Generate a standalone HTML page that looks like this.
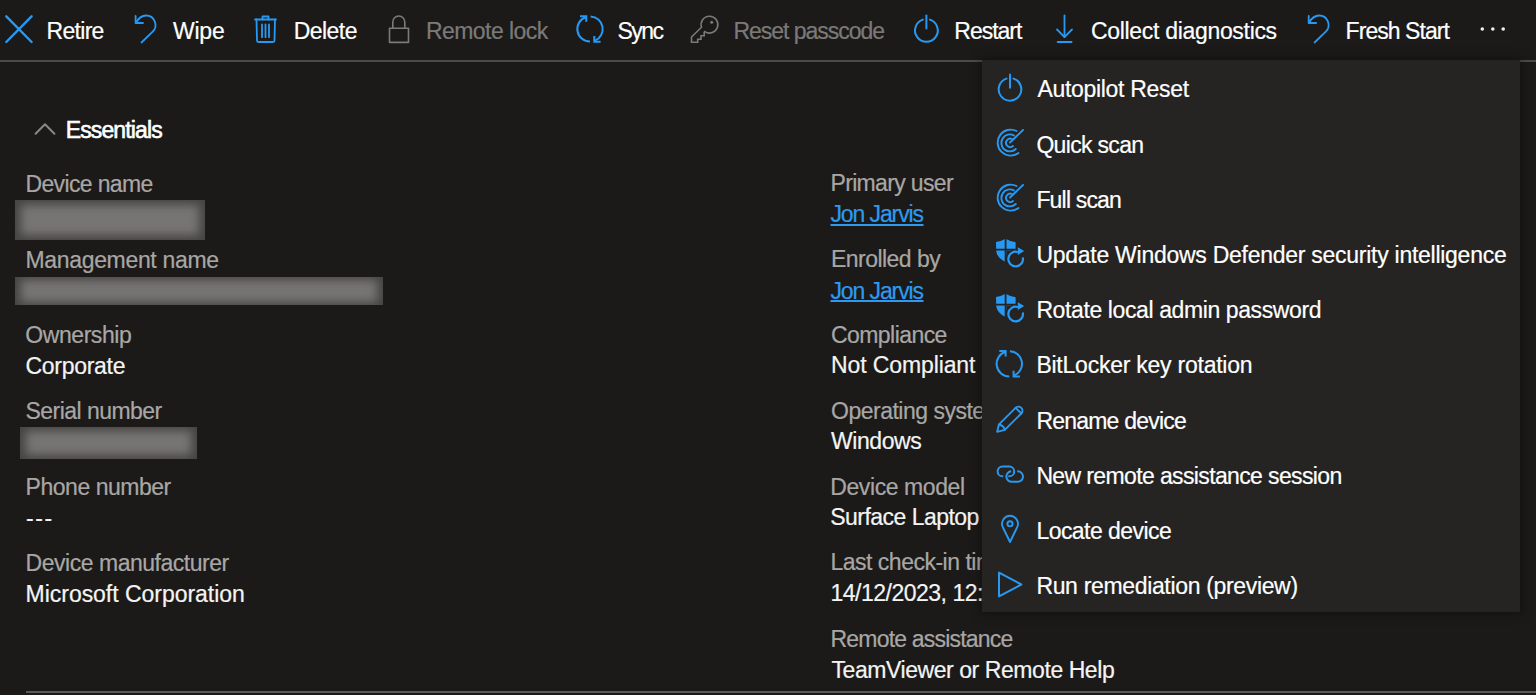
<!DOCTYPE html>
<html><head><meta charset="utf-8"><style>
html,body{margin:0;padding:0;}
body{width:1536px;height:695px;overflow:hidden;background:#1b1a19;position:relative;font-family:"Liberation Sans",sans-serif;}
.t{position:absolute;white-space:nowrap;font-size:23px;line-height:23px;-webkit-text-stroke:0.2px currentColor;}
.ov{position:absolute;left:0;top:0;z-index:2;}
.blur{position:absolute;z-index:2;background:#464544;overflow:hidden;} .blur i{position:absolute;background:#777573;filter:blur(5px);}
.menu{position:absolute;left:982px;top:60px;width:538px;height:552px;background:#252423;z-index:4;box-shadow:0 0 10px 2px rgba(0,0,0,0.35);}
.mt{z-index:5;}
</style></head><body>
<span class="t" style="left:46.50px;top:19.90px;color:#ffffff;letter-spacing:-0.692px;">Retire</span><span class="t" style="left:172.90px;top:19.90px;color:#ffffff;letter-spacing:-0.170px;">Wipe</span><span class="t" style="left:293.70px;top:19.90px;color:#ffffff;letter-spacing:-0.539px;">Delete</span><span class="t" style="left:425.90px;top:19.90px;color:#7b7a79;letter-spacing:-0.548px;">Remote lock</span><span class="t" style="left:617.50px;top:19.90px;color:#ffffff;letter-spacing:-1.544px;">Sync</span><span class="t" style="left:733.40px;top:19.90px;color:#7b7a79;letter-spacing:-1.026px;">Reset passcode</span><span class="t" style="left:954.30px;top:19.90px;color:#ffffff;letter-spacing:-1.007px;">Restart</span><span class="t" style="left:1091.00px;top:19.90px;color:#ffffff;letter-spacing:-0.314px;">Collect diagnostics</span><span class="t" style="left:1345.60px;top:19.90px;color:#ffffff;letter-spacing:-0.946px;">Fresh Start</span><span class="t" style="left:65.70px;top:119.10px;color:#ffffff;letter-spacing:-0.869px;-webkit-text-stroke:0.6px #fff;">Essentials</span><span class="t" style="left:25.50px;top:172.50px;color:#a9a7a5;letter-spacing:-0.644px;">Device name</span><span class="t" style="left:25.50px;top:248.50px;color:#a9a7a5;letter-spacing:-0.334px;">Management name</span><span class="t" style="left:25.25px;top:324.10px;color:#a9a7a5;letter-spacing:-0.424px;">Ownership</span><span class="t" style="left:25.50px;top:355.20px;color:#f4f4f4;letter-spacing:-0.286px;">Corporate</span><span class="t" style="left:25.50px;top:400.40px;color:#a9a7a5;letter-spacing:-0.535px;">Serial number</span><span class="t" style="left:25.60px;top:476.20px;color:#a9a7a5;letter-spacing:-0.475px;">Phone number</span><span class="t" style="left:26.00px;top:507.00px;color:#f4f4f4;letter-spacing:1.641px;">---</span><span class="t" style="left:25.60px;top:551.80px;color:#a9a7a5;letter-spacing:-0.474px;">Device manufacturer</span><span class="t" style="left:25.60px;top:583.20px;color:#f4f4f4;letter-spacing:-0.033px;">Microsoft Corporation</span><span class="t" style="left:830.50px;top:172.00px;color:#a9a7a5;letter-spacing:-0.663px;">Primary user</span><span class="t" style="left:830.40px;top:203.30px;color:#2d9af0;letter-spacing:-1.093px;">Jon Jarvis</span><span class="t" style="left:831.00px;top:247.90px;color:#a9a7a5;letter-spacing:-0.537px;">Enrolled by</span><span class="t" style="left:830.40px;top:279.60px;color:#2d9af0;letter-spacing:-1.093px;">Jon Jarvis</span><span class="t" style="left:831.00px;top:324.30px;color:#a9a7a5;letter-spacing:-0.562px;">Compliance</span><span class="t" style="left:831.00px;top:354.20px;color:#f4f4f4;letter-spacing:-0.111px;">Not Compliant</span><span class="t" style="left:831.00px;top:400.00px;color:#a9a7a5;letter-spacing:-0.500px;">Operating system</span><span class="t" style="left:831.00px;top:430.20px;color:#f4f4f4;letter-spacing:-0.417px;">Windows</span><span class="t" style="left:830.30px;top:475.60px;color:#a9a7a5;letter-spacing:-0.412px;">Device model</span><span class="t" style="left:830.30px;top:506.20px;color:#f4f4f4;letter-spacing:-0.532px;">Surface Laptop</span><span class="t" style="left:830.50px;top:551.00px;color:#a9a7a5;letter-spacing:-0.500px;">Last check-in time</span><span class="t" style="left:830.50px;top:582.20px;color:#f4f4f4;letter-spacing:-0.500px;">14/12/2023, 12:34:56</span><span class="t" style="left:830.50px;top:627.50px;color:#a9a7a5;letter-spacing:-0.800px;">Remote assistance</span><span class="t" style="left:831.50px;top:658.90px;color:#f4f4f4;letter-spacing:-0.433px;">TeamViewer or Remote Help</span>

<svg class="ov" width="1536" height="695" viewBox="0 0 1536 695" fill="none" stroke-linecap="round" stroke-linejoin="round">
 <!-- lines -->
 <rect x="0" y="60" width="1536" height="2" fill="#4c4b4a" stroke="none"/>
 <rect x="26" y="691" width="1510" height="2" fill="#5a5a5a" stroke="none"/>
 <!-- X -->
 <path d="M6.3 16.3 L31.6 42 M31.6 16.3 L6.3 42" stroke="#2899f2" stroke-width="2.4"/>
 <!-- wipe -->
 <g stroke="#2899f2" stroke-width="1.8">
  <path d="M135.6 16 V23 H143"/>
  <path d="M136 22.5 C139 17.5 142.5 15.5 146 15.5 A9.5 9.5 0 0 1 152.7 31.7 L141.5 42.5"/>
 </g>
 <!-- trash -->
 <g stroke="#2899f2" stroke-width="1.8">
  <path d="M255 19.5 H276"/>
  <path d="M262.5 19.5 V16.5 H268.5 V19.5"/>
  <path d="M256.5 19.5 L257 40.5 Q257 42 258.5 42 H273 Q274.5 42 274.5 40.5 L275 19.5"/>
  <path d="M262 24.5 V37.2 M265.5 24.5 V37.2 M269 24.5 V37.2"/>
 </g>
 <!-- lock -->
 <g stroke="#7b7a79" stroke-width="1.6">
  <path d="M392.8 28 V22 A6 6 0 0 1 404.8 22 V28"/>
  <rect x="389.5" y="28.2" width="19" height="14.2"/>
 </g>
 <!-- sync -->
 <g id="sync" stroke="#2899f2" stroke-width="2" stroke-linecap="butt" stroke-linejoin="miter">
  <path d="M586.1 17 A12.6 12.6 0 0 0 590 41.6"/>
  <path d="M590.6 16.4 A12.6 12.6 0 0 1 595 40.6"/>
  <path d="M580 16.3 H586.3 V21.8"/>
  <path d="M594.3 36 V41.8 H600.6"/>
 </g>
 <!-- key -->
 <g stroke="#7b7a79" stroke-width="1.6">
  <path d="M701.5 27.3 L691.5 37 V42.3 H697.7 V39.2 H701 V35.8 H704.2 V32.3 L704.8 31.65 A8.4 8.4 0 1 0 701.5 27.3 Z" stroke-linejoin="miter"/>
  <circle cx="711.7" cy="22.3" r="1.5" fill="#7b7a79" stroke="none"/>
 </g>
 <!-- power -->
 <g stroke="#2899f2" stroke-width="2">
  <path d="M926.4 15.5 V28.5"/>
  <path d="M922.9 19.65 A11.35 11.35 0 1 0 929.9 19.65"/>
 </g>
 <!-- download -->
 <g stroke="#2899f2" stroke-width="1.8">
  <path d="M1064.5 15.5 V37"/>
  <path d="M1057 29.5 L1064.5 37 L1072 29.5"/>
  <path d="M1057.6 42 H1071.6"/>
 </g>
 <!-- fresh -->
 <g stroke="#2899f2" stroke-width="1.8" transform="translate(1173.1 0)">
  <path d="M135.6 16 V23 H143"/>
  <path d="M136 22.5 C139 17.5 142.5 15.5 146 15.5 A9.5 9.5 0 0 1 152.7 31.7 L141.5 42.5"/>
 </g>
 <!-- dots -->
 <g fill="#eeeeee" stroke="none">
  <circle cx="1482.3" cy="29" r="1.8"/><circle cx="1492.8" cy="29" r="1.8"/><circle cx="1503.2" cy="29" r="1.8"/>
 </g>
 <!-- chevron -->
 <path d="M35.6 133.8 L45 124.2 L54.4 133.8" stroke="#8a8886" stroke-width="2"/>
 <!-- link underlines -->
 <rect x="830.5" y="224" width="93" height="2" fill="#2d9af0" stroke="none"/>
 <rect x="830.5" y="300" width="93" height="2" fill="#2d9af0" stroke="none"/>
</svg>


<div class="blur" style="left:15px;top:200px;width:190px;height:39.5px"><i style="left:6px;top:5px;right:6px;bottom:5px"></i></div>
<div class="blur" style="left:15px;top:277px;width:368px;height:28px"><i style="left:6px;top:3px;right:6px;bottom:3px"></i></div>
<div class="blur" style="left:20px;top:427px;width:176.5px;height:32px"><i style="left:6px;top:4px;right:6px;bottom:4px"></i></div>

<div class="menu"></div>
<span class="t mt" style="left:1037.40px;top:78.30px;color:#ffffff;letter-spacing:-0.299px;">Autopilot Reset</span><span class="t mt" style="left:1036.40px;top:133.50px;color:#ffffff;letter-spacing:-0.675px;">Quick scan</span><span class="t mt" style="left:1036.40px;top:188.70px;color:#ffffff;letter-spacing:-0.818px;">Full scan</span><span class="t mt" style="left:1036.40px;top:243.90px;color:#ffffff;letter-spacing:-0.265px;">Update Windows Defender security intelligence</span><span class="t mt" style="left:1036.40px;top:299.10px;color:#ffffff;letter-spacing:-0.393px;">Rotate local admin password</span><span class="t mt" style="left:1036.40px;top:354.30px;color:#ffffff;letter-spacing:-0.237px;">BitLocker key rotation</span><span class="t mt" style="left:1036.40px;top:409.50px;color:#ffffff;letter-spacing:-0.785px;">Rename device</span><span class="t mt" style="left:1036.40px;top:464.70px;color:#ffffff;letter-spacing:-0.626px;">New remote assistance session</span><span class="t mt" style="left:1036.40px;top:519.90px;color:#ffffff;letter-spacing:-0.545px;">Locate device</span><span class="t mt" style="left:1036.40px;top:575.10px;color:#ffffff;letter-spacing:-0.336px;">Run remediation (preview)</span>

<svg class="ov" style="z-index:6" width="1536" height="695" viewBox="0 0 1536 695" fill="none" stroke-linecap="round" stroke-linejoin="round">
 <!-- power -->
 <g stroke="#2899f2" stroke-width="2">
  <path d="M1010 74.5 V87.8"/>
  <path d="M1006.5 78.6 A11.3 11.3 0 1 0 1013.5 78.6"/>
 </g>
 <!-- scans -->
 <g id="scan" stroke="#2899f2" stroke-width="1.9">
  <path d="M1016.5 131 A13 13 0 1 0 1018.5 153"/>
  <path d="M1014 135.5 A8.5 8.5 0 1 0 1015.8 149"/>
  <path d="M1012 139 A4.2 4.2 0 1 0 1013 146"/>
  <path d="M1010 142.5 L1023 130"/>
 </g>
 <use href="#scan" transform="translate(0 55)"/>
 <!-- shield refresh -->
 <g id="shield">
  <path d="M996 242 Q1001 241.5 1005.6 238.8 Q1010 241.5 1015.6 242.2 V252 Q1014 258 1005.6 262 Q997 258 996.2 251 Z" fill="#2899f2" stroke="none"/>
  <path d="M1005.6 237 V263 M994 249.7 H1018" stroke="#252423" stroke-width="1.8"/>
  <rect x="1006.5" y="250.6" width="11" height="12" fill="#252423" stroke="none"/>
  <circle cx="1015.5" cy="259" r="7.3" fill="#252423" stroke="#252423" stroke-width="5"/>
  <path d="M1017 246 L1025.5 251 L1017 256.2 Z" fill="#252423" stroke="#252423" stroke-width="1.6"/>
  <path d="M1022.8 257.5 A7.3 7.3 0 1 1 1017.9 252.1" stroke="#2899f2" stroke-width="2.2" fill="none" stroke-linecap="butt"/>
  <path d="M1017.8 247.2 L1024.2 251 L1017.8 254.9 Z" fill="#2899f2" stroke="none"/>
 </g>
 <use href="#shield" transform="translate(0 55)"/>
 <!-- bitlocker sync -->
 <g stroke="#2899f2" stroke-width="2" stroke-linecap="butt" stroke-linejoin="miter" transform="translate(419.3 334.8)">
  <path d="M586.1 17 A12.6 12.6 0 0 0 590 41.6"/>
  <path d="M590.6 16.4 A12.6 12.6 0 0 1 595 40.6"/>
  <path d="M580 16.3 H586.3 V21.8"/>
  <path d="M594.3 36 V41.8 H600.6"/>
 </g>
 <!-- pencil -->
 <g stroke="#2899f2" stroke-width="1.9">
  <path d="M997.2 431.8 L999 424.3 L1015.6 407.8 A4.03 4.03 0 0 1 1021.3 413.5 L1004.8 429.9 Z"/>
  <path d="M1015.6 407.8 L1021.3 413.5 M999.2 424.8 Q1003.2 425.2 1004.8 429.6"/>
 </g>
 <!-- link -->
 <g stroke="#2899f2" stroke-width="2" stroke-linecap="butt">
  <path d="M1003.2 476.3 H1002.5 A4.9 4.9 0 0 1 1002.5 466.5 H1009.3 A4.9 4.9 0 0 1 1009.3 476.3 H1008.3"/>
  <path d="M1011.3 471.3 A5.25 5.25 0 0 0 1011.95 481.8 H1017.75 A5.25 5.25 0 0 0 1017.75 471.3 H1017.2"/>
 </g>
 <!-- pin -->
 <g stroke="#2899f2" stroke-width="1.9">
  <path d="M1010 542 L1003.2 528 A8 8 0 1 1 1016.8 528 Z"/>
  <circle cx="1010" cy="523.8" r="2.6"/>
 </g>
 <!-- play -->
 <path d="M999 572.6 V596.4 L1021.3 584.5 Z" stroke="#2899f2" stroke-width="2"/>
</svg>

</body></html>
